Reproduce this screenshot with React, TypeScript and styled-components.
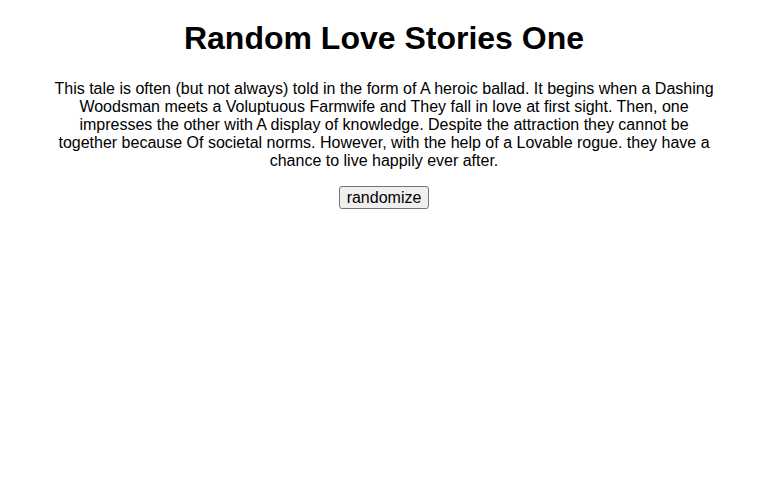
import React, { useState } from 'react';
import styled, { createGlobalStyle } from 'styled-components';

const heroes = ['Dashing Woodsman', 'Brooding Knight', 'Shy Baker', 'Wandering Bard'];
const lovers = ['Voluptuous Farmwife', 'Clever Princess', 'Stern Governess', 'Lonely Heiress'];
const forms = ['A heroic ballad', 'A bawdy song', 'An epic poem', 'A fireside tale'];
const impressions = ['A display of knowledge', 'A feat of strength', 'A witty remark', 'A gift of flowers'];
const obstacles = ['Of societal norms', 'Of a family feud', 'Of a jealous rival', 'Of an old curse'];
const helpers = ['Lovable rogue', 'Wise old witch', 'Talking cat', 'Meddling aunt'];

const pick = (list: string[]) => list[Math.floor(Math.random() * list.length)];

function App() {
  const [story, setStory] = useState({
    form: forms[0],
    hero: heroes[0],
    lover: lovers[0],
    impression: impressions[0],
    obstacle: obstacles[0],
    helper: helpers[0],
  });

  const randomize = () =>
    setStory({
      form: pick(forms),
      hero: pick(heroes),
      lover: pick(lovers),
      impression: pick(impressions),
      obstacle: pick(obstacles),
      helper: pick(helpers),
    });

  return (
    <>
      <GlobalStyle />
      <Page>
        <Title>Random Love Stories One</Title>
        <Story>
          This tale is often (but not always) told in the form of {story.form}. It begins when a{' '}
          {story.hero} meets a {story.lover} and They fall in love at first sight. Then, one
          impresses the other with {story.impression}. Despite the attraction they cannot be
          together because {story.obstacle}. However, with the help of a {story.helper}. they have
          a chance to live happily ever after.
        </Story>
        <Button onClick={randomize}>randomize</Button>
      </Page>
    </>
  );
}

const GlobalStyle = createGlobalStyle`
  body {
    margin: 0;
    background: #fff;
    font-family: "Liberation Sans", Arial, sans-serif;
    color: #000;
  }
`;

const Page = styled.div`
  display: flex;
  flex-direction: column;
  align-items: center;
  padding: 20px 8px 0;
  text-align: center;
`;

const Title = styled.h1`
  font-size: 32px;
  font-weight: bold;
  line-height: 37px;
  margin: 0 0 22px;
`;

const Story = styled.p`
  max-width: 664px;
  font-size: 16px;
  line-height: 18px;
  margin: 1px 0 16px;
`;

const Button = styled.button`
  font-family: "Liberation Sans", Arial, sans-serif;
  font-size: 16px;
  line-height: 18px;
  padding: 2px 7px 1px;
  color: #000;
  background: #efefef;
  border: 1px solid #767676;
  border-radius: 3px;
  cursor: pointer;
`;

export default App;
